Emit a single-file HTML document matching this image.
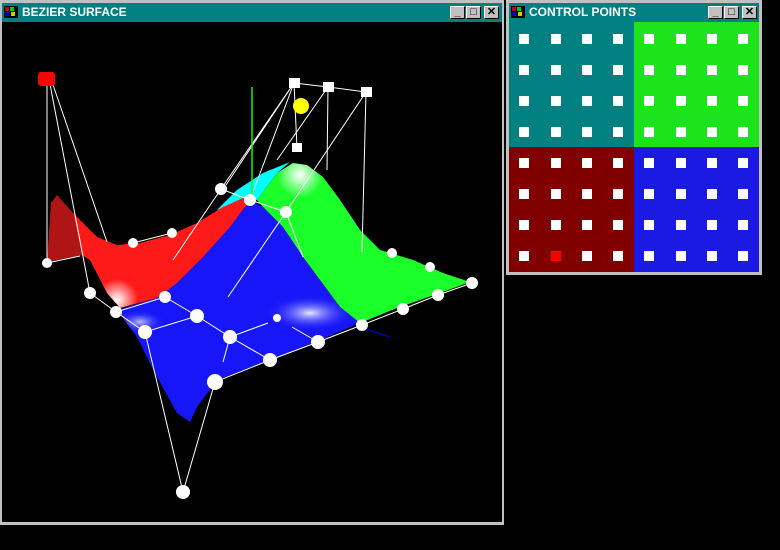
<!DOCTYPE html>
<html><head><style>
body{margin:0;width:780px;height:550px;background:#000;position:relative;overflow:hidden;font-family:"Liberation Sans",sans-serif}
.win{position:absolute;background:#c0c0c0}
.title{position:absolute;background:#008080;color:#fff;font-weight:bold;font-size:12px;line-height:18px}
.title span{position:absolute;left:20px;top:0}
.ico{position:absolute;left:2px;top:3px;width:14px;height:12px;background:#000}
.ico i{position:absolute;width:4px;height:4px}
.btn{position:absolute;top:3px;width:15px;height:13px;background:#c0c0c0;border-top:1px solid #fff;border-left:1px solid #fff;border-right:1px solid #000;border-bottom:1px solid #000;box-sizing:border-box;font-size:11px;color:#000;text-align:center;line-height:11px}
.q{position:absolute;width:125px;height:125px}
</style></head><body>
<div class="win" style="left:0;top:0;width:504px;height:525px">
 <div class="title" style="left:2px;top:3px;width:500px;height:19px">
  <div class="ico"><i style="left:1px;top:1px;background:#c00"></i><i style="left:6px;top:1px;background:#0c0"></i><i style="left:1px;top:6px;background:#00c"></i><i style="left:7px;top:6px;background:#cc0"></i></div>
  <span>BEZIER SURFACE</span>
  <div class="btn" style="left:448px">_</div><div class="btn" style="left:464px">□</div><div class="btn" style="left:482px">✕</div>
 </div>
 <div style="position:absolute;left:2px;top:22px;width:500px;height:500px;background:#000"></div>
</div>
<div class="win" style="left:506px;top:0;width:256px;height:275px">
 <div class="title" style="left:3px;top:3px;width:250px;height:19px">
  <div class="ico"><i style="left:1px;top:1px;background:#c00"></i><i style="left:6px;top:1px;background:#0c0"></i><i style="left:1px;top:6px;background:#00c"></i><i style="left:7px;top:6px;background:#cc0"></i></div>
  <span>CONTROL POINTS</span>
  <div class="btn" style="left:199px">_</div><div class="btn" style="left:215px">□</div><div class="btn" style="left:233px">✕</div>
 </div>
 <div class="q" style="left:3px;top:22px;background:#008080"></div>
 <div class="q" style="left:128px;top:22px;background:#1ce31c"></div>
 <div class="q" style="left:3px;top:147px;background:#800000"></div>
 <div class="q" style="left:128px;top:147px;background:#1a1ae3"></div>
</div>
<svg style="position:absolute;left:0;top:0" width="780" height="550">
<defs>
<radialGradient id="hr" cx="117" cy="300" r="35" gradientUnits="userSpaceOnUse"><stop offset="0" stop-color="#fff"/><stop offset=".6" stop-color="#ff1a1a"/><stop offset="1" stop-color="#ff1a1a"/></radialGradient>
<radialGradient id="hb" cx="0.5" cy="0.5" r="0.5"><stop offset="0" stop-color="#fff" stop-opacity="0.9"/><stop offset="1" stop-color="#1a1aff" stop-opacity="0"/></radialGradient>
<radialGradient id="hg" cx="300" cy="175" r="65" gradientUnits="userSpaceOnUse"><stop offset="0" stop-color="#fff"/><stop offset=".35" stop-color="#1aff2a"/><stop offset="1" stop-color="#1aff2a"/></radialGradient>
<clipPath id="bc"><polygon points="250,200 263,207 283,227 303,257 320,280 340,307 360,323 320,340 270,360 217,380 197,407 190,422 177,413 157,377 137,337 117,310 157,298 177,283 203,257 230,227"/></clipPath>
</defs>
<polygon fill="#0ff" points="217,210 237,190 263,173 290,162 277,173 257,200 243,198 227,207"/>
<polygon fill="#0ff" points="173,236 182,231 193,232 190,236"/>
<polygon fill="url(#hg)" points="257,200 277,173 293,163 307,165 323,177 340,200 360,230 380,250 413,260 443,273 470,282 440,293 397,308 360,323 340,307 320,280 303,257 283,227 263,207"/>
<polygon fill="#1616f8" points="250,200 263,207 283,227 303,257 320,280 340,307 360,323 320,340 270,360 217,380 197,407 190,422 177,413 157,377 137,337 117,310 157,298 177,283 203,257 230,227"/>
<g clip-path="url(#bc)">
<ellipse cx="310" cy="313" rx="45" ry="18" fill="url(#hb)"/>
<ellipse cx="140" cy="322" rx="25" ry="12" fill="url(#hb)" opacity="0.8"/>
</g>
<polygon fill="#b01515" points="47,262 51,203 57,195 73,213 82,255"/>
<polygon fill="url(#hr)" points="57,195 73,213 97,237 117,245 140,243 170,235 197,223 223,207 243,198 250,200 230,227 203,257 177,283 157,298 120,308 107,293 90,260 82,255 73,213"/>
<g stroke="#fff" stroke-width="1" fill="none">
<line x1="47" y1="79" x2="47" y2="263"/><line x1="49" y1="79" x2="90" y2="293"/><line x1="51" y1="79" x2="107" y2="242"/>
<polyline points="90,293 116,312 165,297"/>
<polyline points="116,312 145,332 183,492 215,382 270,360 318,342 362,325 403,309 438,295 472,283"/>
<polyline points="145,332 197,316 230,337 270,360"/><line x1="165" y1="297" x2="197" y2="316"/>
<line x1="230" y1="337" x2="268" y2="323"/><line x1="230" y1="337" x2="223" y2="362"/><line x1="292" y1="327" x2="318" y2="342"/>
<polyline points="173,260 221,189 294,83 250,200"/><line x1="221" y1="189" x2="250" y2="200"/><line x1="250" y1="200" x2="286" y2="212"/>
<polyline points="294,83 328,87 366,92 286,212 228,297"/><line x1="286" y1="212" x2="303" y2="257"/>
<line x1="328" y1="87" x2="327" y2="170"/><line x1="366" y1="92" x2="362" y2="252"/><line x1="328" y1="87" x2="277" y2="160"/>
<line x1="294" y1="83" x2="297" y2="148"/><line x1="294" y1="83" x2="226" y2="185"/>
<line x1="47" y1="263" x2="80" y2="256"/><line x1="133" y1="243" x2="172" y2="233"/>
</g>
<line x1="252" y1="87" x2="252" y2="200" stroke="#0f0" stroke-width="1.5"/>
<line x1="360" y1="327" x2="390" y2="337" stroke="#00f"/>
<circle cx="301" cy="106" r="8" fill="#ff0"/>
<rect x="38" y="72" width="17" height="14" rx="3" fill="#f00"/>
<g fill="#fff">
<circle cx="47" cy="263" r="5"/><circle cx="90" cy="293" r="6"/><circle cx="116" cy="312" r="6"/><circle cx="145" cy="332" r="7"/>
<circle cx="183" cy="492" r="7"/><circle cx="215" cy="382" r="8"/><circle cx="270" cy="360" r="7"/><circle cx="318" cy="342" r="7"/>
<circle cx="362" cy="325" r="6"/><circle cx="403" cy="309" r="6"/><circle cx="438" cy="295" r="6"/><circle cx="472" cy="283" r="6"/>
<circle cx="430" cy="267" r="5"/><circle cx="392" cy="253" r="5"/><circle cx="165" cy="297" r="6"/><circle cx="197" cy="316" r="7"/>
<circle cx="230" cy="337" r="7"/><circle cx="133" cy="243" r="5"/><circle cx="172" cy="233" r="5"/><circle cx="221" cy="189" r="6"/>
<circle cx="250" cy="200" r="6"/><circle cx="286" cy="212" r="6"/><circle cx="277" cy="318" r="4"/>
<rect x="292" y="143" width="10" height="9"/><rect x="289" y="78" width="11" height="10"/><rect x="323" y="82" width="11" height="10"/><rect x="361" y="87" width="11" height="10"/>
</g>
<g fill="#fff">
<rect x="519" y="34" width="10" height="10"/><rect x="551" y="34" width="10" height="10"/><rect x="582" y="34" width="10" height="10"/><rect x="613" y="34" width="10" height="10"/>
<rect x="644" y="34" width="10" height="10"/><rect x="676" y="34" width="10" height="10"/><rect x="707" y="34" width="10" height="10"/><rect x="738" y="34" width="10" height="10"/>
<rect x="519" y="65" width="10" height="10"/><rect x="551" y="65" width="10" height="10"/><rect x="582" y="65" width="10" height="10"/><rect x="613" y="65" width="10" height="10"/>
<rect x="644" y="65" width="10" height="10"/><rect x="676" y="65" width="10" height="10"/><rect x="707" y="65" width="10" height="10"/><rect x="738" y="65" width="10" height="10"/>
<rect x="519" y="96" width="10" height="10"/><rect x="551" y="96" width="10" height="10"/><rect x="582" y="96" width="10" height="10"/><rect x="613" y="96" width="10" height="10"/>
<rect x="644" y="96" width="10" height="10"/><rect x="676" y="96" width="10" height="10"/><rect x="707" y="96" width="10" height="10"/><rect x="738" y="96" width="10" height="10"/>
<rect x="519" y="127" width="10" height="10"/><rect x="551" y="127" width="10" height="10"/><rect x="582" y="127" width="10" height="10"/><rect x="613" y="127" width="10" height="10"/>
<rect x="644" y="127" width="10" height="10"/><rect x="676" y="127" width="10" height="10"/><rect x="707" y="127" width="10" height="10"/><rect x="738" y="127" width="10" height="10"/>
<rect x="519" y="158" width="10" height="10"/><rect x="551" y="158" width="10" height="10"/><rect x="582" y="158" width="10" height="10"/><rect x="613" y="158" width="10" height="10"/>
<rect x="644" y="158" width="10" height="10"/><rect x="676" y="158" width="10" height="10"/><rect x="707" y="158" width="10" height="10"/><rect x="738" y="158" width="10" height="10"/>
<rect x="519" y="189" width="10" height="10"/><rect x="551" y="189" width="10" height="10"/><rect x="582" y="189" width="10" height="10"/><rect x="613" y="189" width="10" height="10"/>
<rect x="644" y="189" width="10" height="10"/><rect x="676" y="189" width="10" height="10"/><rect x="707" y="189" width="10" height="10"/><rect x="738" y="189" width="10" height="10"/>
<rect x="519" y="220" width="10" height="10"/><rect x="551" y="220" width="10" height="10"/><rect x="582" y="220" width="10" height="10"/><rect x="613" y="220" width="10" height="10"/>
<rect x="644" y="220" width="10" height="10"/><rect x="676" y="220" width="10" height="10"/><rect x="707" y="220" width="10" height="10"/><rect x="738" y="220" width="10" height="10"/>
<rect x="519" y="251" width="10" height="10"/><rect x="551" y="251" width="10" height="10" fill="#f00"/><rect x="582" y="251" width="10" height="10"/><rect x="613" y="251" width="10" height="10"/>
<rect x="644" y="251" width="10" height="10"/><rect x="676" y="251" width="10" height="10"/><rect x="707" y="251" width="10" height="10"/><rect x="738" y="251" width="10" height="10"/>
</g>
</svg>
</body></html>
